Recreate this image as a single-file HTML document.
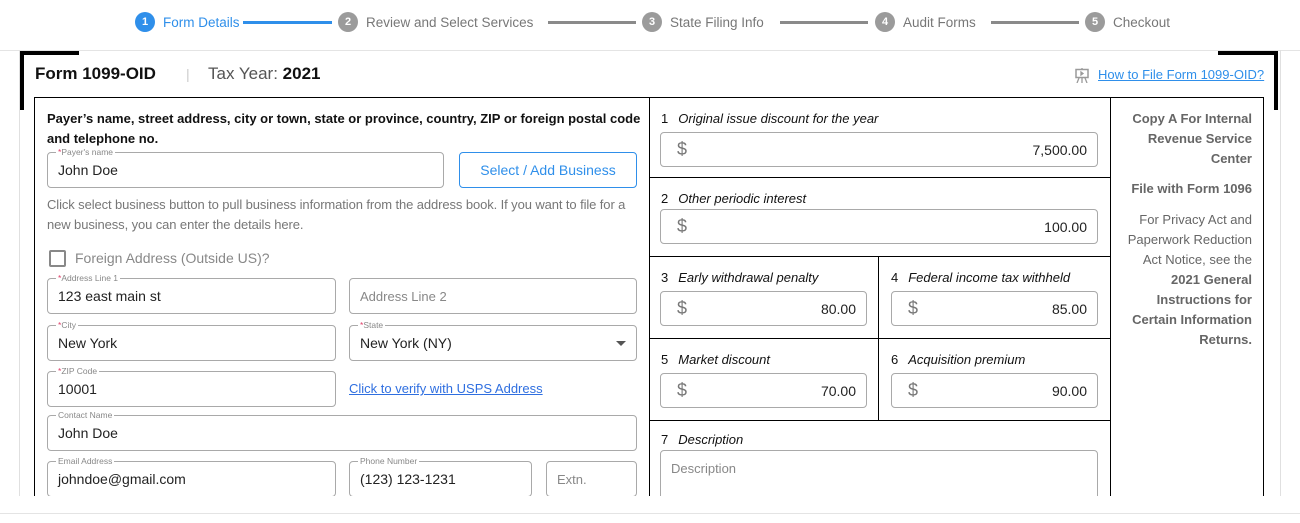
<!DOCTYPE html>
<html><head><meta charset="utf-8"><style>
*{box-sizing:border-box;margin:0;padding:0}
body{width:1300px;height:523px;background:#fff;font-family:"Liberation Sans",sans-serif;position:relative;overflow:hidden;color:#222}
.a{position:absolute}
.step{position:absolute;top:12px;display:flex;align-items:center;font-size:13.5px;color:#777}
.num{width:20px;height:20px;border-radius:50%;background:#9b9b9b;color:#fff;font-size:11px;display:flex;align-items:center;justify-content:center;margin-right:8px;font-weight:bold}
.line{position:absolute;top:21px;height:3px;background:#8a8a8a}
.fld{position:absolute;border:1px solid #a9a9a9;border-radius:4px;height:36px;font-size:14px;color:#222;padding:0 10px;display:flex;align-items:center}
.lbl{position:absolute;top:-6px;left:8px;background:#fff;font-size:8.5px;color:#888;padding:0 2px;line-height:10px}
.lbl b{color:#e0406a;font-weight:normal}
.ph{color:#888;font-size:13px}
.money{position:absolute;border:1px solid #a9a9a9;border-radius:4px;height:35px;font-size:14px;display:flex;align-items:center;justify-content:space-between;padding:0 10px 0 16px}
.money span{color:#777;font-size:18px}
.bl{position:absolute;font-size:13px;font-style:italic;color:#111}
.bl i{font-style:normal;margin-right:10px}
</style></head><body>
<div class="step" style="left:135px;color:#2f8fea"><div class="num" style="background:#2f8fea">1</div>Form Details</div>
<div class="line" style="left:243px;width:89px;background:#2f8fea"></div>
<div class="step" style="left:338px"><div class="num">2</div>Review and Select Services</div>
<div class="line" style="left:548px;width:88px"></div>
<div class="step" style="left:642px"><div class="num">3</div>State Filing Info</div>
<div class="line" style="left:780px;width:88px"></div>
<div class="step" style="left:875px"><div class="num">4</div>Audit Forms</div>
<div class="line" style="left:991px;width:88px"></div>
<div class="step" style="left:1085px"><div class="num">5</div>Checkout</div>
<div class="a" style="left:0;top:50px;width:1300px;height:1px;background:#e4e4e4"></div>
<div class="a" style="left:19px;top:50px;width:1px;height:446px;background:#e0e0e0"></div>
<div class="a" style="left:1280px;top:50px;width:1px;height:446px;background:#e0e0e0"></div>
<div class="a" style="left:0;top:513px;width:1300px;height:1px;background:#e4e4e4"></div>
<div class="a" style="left:20px;top:51px;width:59px;height:4px;background:#000"></div>
<div class="a" style="left:20px;top:51px;width:4px;height:59px;background:#000"></div>
<div class="a" style="left:1218px;top:51px;width:60px;height:4px;background:#000"></div>
<div class="a" style="left:1274px;top:51px;width:4px;height:59px;background:#000"></div>
<div class="a" style="left:35px;top:64px;font-size:17px;font-weight:bold;color:#111">Form 1099-OID</div>
<div class="a" style="left:186px;top:66px;font-size:14px;color:#ccc">|</div>
<div class="a" style="left:208px;top:64px;font-size:17px;color:#555">Tax Year: <b style="color:#111">2021</b></div>
<svg class="a" style="left:1075px;top:68px" width="14" height="15" viewBox="0 0 14 15"><rect x="1" y="1.5" width="12" height="8" fill="none" stroke="#9a9a9a" stroke-width="1.5"/><path d="M7 1V0M6 4l2 1.5-2 1.5z M4 10l-2 5M10 10l2 5M7 10v5" stroke="#9a9a9a" stroke-width="1.3" fill="#9a9a9a"/></svg>
<div class="a" style="left:1098px;top:67px;font-size:13px;color:#2f8fea;text-decoration:underline">How to File Form 1099-OID?</div>
<div class="a" style="left:34px;top:97px;width:1230px;height:410px;border:1px solid #000"></div>
<div class="a" style="left:649px;top:97px;width:1px;height:410px;background:#000"></div>
<div class="a" style="left:1110px;top:97px;width:1px;height:410px;background:#000"></div>
<div class="a" style="left:649px;top:177px;width:461px;height:1px;background:#000"></div>
<div class="a" style="left:649px;top:256px;width:461px;height:1px;background:#000"></div>
<div class="a" style="left:649px;top:338px;width:461px;height:1px;background:#000"></div>
<div class="a" style="left:649px;top:420px;width:461px;height:1px;background:#000"></div>
<div class="a" style="left:878px;top:256px;width:1px;height:164px;background:#000"></div>
<div class="a" style="left:47px;top:109px;width:595px;font-size:13px;font-weight:bold;line-height:20px;color:#111">Payer’s name, street address, city or town, state or province, country, ZIP or foreign postal code and telephone no.</div>
<div class="fld" style="left:47px;top:152px;width:397px"><div class="lbl"><b>*</b>Payer's name</div>John Doe</div>
<div class="fld" style="left:459px;top:152px;width:178px;border-color:#2f8fea;justify-content:center;color:#2f8fea">Select / Add Business</div>
<div class="a" style="left:47px;top:195px;width:590px;font-size:13px;line-height:20px;color:#777;letter-spacing:-0.1px">Click select business button to pull business information from the address book. If you want to file for a new business, you can enter the details here.</div>
<div class="a" style="left:49px;top:250px;width:17px;height:17px;border:2px solid #888;border-radius:2px"></div>
<div class="a" style="left:75px;top:250px;font-size:14px;color:#888">Foreign Address (Outside US)?</div>
<div class="fld" style="left:47px;top:278px;width:289px"><div class="lbl"><b>*</b>Address Line 1</div>123 east main st</div>
<div class="fld" style="left:349px;top:278px;width:288px"><span class="ph">Address Line 2</span></div>
<div class="fld" style="left:47px;top:325px;width:289px"><div class="lbl"><b>*</b>City</div>New York</div>
<div class="fld" style="left:349px;top:325px;width:288px;justify-content:space-between"><div class="lbl"><b>*</b>State</div>New York (NY)<span style="border:5px solid transparent;border-top:5px solid #555;margin-top:5px"></span></div>
<div class="fld" style="left:47px;top:371px;width:289px"><div class="lbl"><b>*</b>ZIP Code</div>10001</div>
<div class="a" style="left:349px;top:381px;font-size:13px;color:#2f6fe0;text-decoration:underline">Click to verify with USPS Address</div>
<div class="fld" style="left:47px;top:415px;width:590px"><div class="lbl">Contact Name</div>John Doe</div>
<div class="fld" style="left:47px;top:461px;width:289px"><div class="lbl">Email Address</div>johndoe@gmail.com</div>
<div class="fld" style="left:349px;top:461px;width:183px"><div class="lbl">Phone Number</div>(123) 123-1231</div>
<div class="fld" style="left:546px;top:461px;width:91px"><span class="ph">Extn.</span></div>
<div class="bl" style="left:661px;top:111px"><i>1</i>Original issue discount for the year</div>
<div class="money" style="left:660px;top:132px;width:438px"><span>$</span>7,500.00</div>
<div class="bl" style="left:661px;top:191px"><i>2</i>Other periodic interest</div>
<div class="money" style="left:660px;top:209px;width:438px"><span>$</span>100.00</div>
<div class="bl" style="left:661px;top:270px"><i>3</i>Early withdrawal penalty</div>
<div class="money" style="left:660px;top:291px;width:207px"><span>$</span>80.00</div>
<div class="bl" style="left:891px;top:270px"><i>4</i>Federal income tax withheld</div>
<div class="money" style="left:891px;top:291px;width:207px"><span>$</span>85.00</div>
<div class="bl" style="left:661px;top:352px"><i>5</i>Market discount</div>
<div class="money" style="left:660px;top:373px;width:207px"><span>$</span>70.00</div>
<div class="bl" style="left:891px;top:352px"><i>6</i>Acquisition premium</div>
<div class="money" style="left:891px;top:373px;width:207px"><span>$</span>90.00</div>
<div class="bl" style="left:661px;top:432px"><i>7</i>Description</div>
<div class="a" style="left:660px;top:450px;width:438px;height:60px;border:1px solid #a9a9a9;border-radius:4px;padding:10px;font-size:13px;color:#888">Description</div>
<div class="a" style="left:1115px;top:109px;width:137px;text-align:right;font-size:13px;line-height:20px;color:#666">
<b>Copy A For Internal Revenue Service Center</b>
<div style="margin-top:10px"><b>File with Form 1096</b></div>
<div style="margin-top:11px">For Privacy Act and Paperwork Reduction Act Notice, see the <b>2021 General Instructions for Certain Information Returns.</b></div>
</div>
<div class="a" style="left:0;top:496px;width:1300px;height:17px;background:#fff"></div>
</body></html>
